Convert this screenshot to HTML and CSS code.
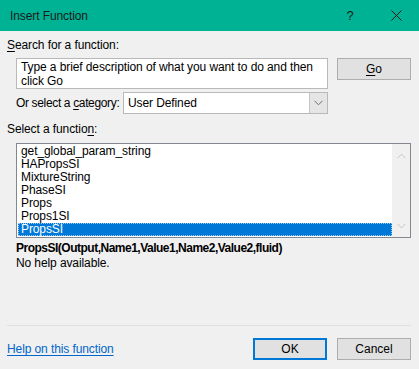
FILE: index.html
```html
<!DOCTYPE html>
<html lang="en">
<head>
    <meta charset="UTF-8">
    <title>Insert Function</title>
    <link rel="stylesheet" href="styles.css">
</head>
<body>
    <div class="dialog">
        <!-- Title bar -->
        <div class="titlebar">
            <span class="title">Insert Function</span>
            <span class="title-help">?</span>
            <span class="title-close">
                <svg width="11" height="11" viewBox="0 0 11 11"><path d="M0.5 0.5 L10.5 10.5 M10.5 0.5 L0.5 10.5" stroke="#1a1a1a" stroke-width="1"/></svg>
            </span>
        </div>

        <div class="content">
            <div class="label"><u>S</u>earch for a function:</div>

            <div class="search-row">
                <div class="search-box">Type a brief description of what you want to do and then click Go</div>
                <button class="btn"><u>G</u>o</button>
            </div>

            <div class="category-row">
                <span class="category-label">Or select a <u>c</u>ategory:</span>
                <div class="select">
                    <span class="select-value">User Defined</span>
                    <span class="select-arrow">
                        <svg width="9" height="6" viewBox="0 0 9 6"><path d="M0.5 0.8 L4.5 4.8 L8.5 0.8" fill="none" stroke="#6e6e6e" stroke-width="1"/></svg>
                    </span>
                </div>
            </div>

            <div class="label list-label">Select a functio<u>n</u>:</div>

            <div class="listbox">
                <div class="list-items">
                    <div class="list-item">get_global_param_string</div>
                    <div class="list-item">HAPropsSI</div>
                    <div class="list-item">MixtureString</div>
                    <div class="list-item">PhaseSI</div>
                    <div class="list-item">Props</div>
                    <div class="list-item">Props1SI</div>
                    <div class="list-item selected">PropsSI</div>
                </div>
                <div class="scrollbar">
                    <svg width="9" height="6" viewBox="0 0 9 6"><path d="M0.5 5.2 L4.5 1.2 L8.5 5.2" fill="none" stroke="#c2c2c2" stroke-width="1"/></svg>
                    <svg width="9" height="6" viewBox="0 0 9 6"><path d="M0.5 0.8 L4.5 4.8 L8.5 0.8" fill="none" stroke="#c2c2c2" stroke-width="1"/></svg>
                </div>
            </div>

            <div class="signature">PropsSI(Output,Name1,Value1,Name2,Value2,fluid)</div>
            <div class="help-text">No help available.</div>

            <div class="separator"></div>

            <div class="footer">
                <a class="help-link" href="#">Help on this function</a>
                <div class="footer-btns">
                    <button class="btn btn-default">OK</button>
                    <button class="btn">Cancel</button>
                </div>
            </div>
        </div>
    </div>
</body>
</html>
```

FILE: styles.css
```css
/* Insert Function dialog */
body { margin: 0; padding: 0; background: #f0f0f0; font-family: "Liberation Sans", Arial, sans-serif; font-size: 12px; letter-spacing: -0.1px; color: #000; }
u { text-decoration-thickness: 1px; text-underline-offset: 2px; }

.dialog { width: 419px; height: 369px; background: #f0f0f0; overflow: hidden; }

.titlebar { height: 31px; background: #00b294; display: flex; align-items: center; padding-left: 10px; color: #1a1a1a; }
.title { flex: 1; font-size: 12px; }
.title-help { width: 46px; text-align: center; font-size: 13px; }
.title-close { width: 46px; display: flex; justify-content: center; }

.content { padding: 0 8px 0 7px; }
.label { line-height: 15px; margin-top: 7px; }

.search-row { display: flex; justify-content: space-between; align-items: flex-start; margin-top: 5px; padding-left: 9px; }
.search-box { width: 306px; height: 28px; background: #fff; border: 1px solid #b9b9b9; padding: 1px 0 0 4px; line-height: 14px; }

.btn { width: 74px; height: 22px; background: #e1e1e1; border: 1px solid #adadad; font-family: inherit; font-size: 12px; color: #000; padding: 0; }
.btn-default { border: 2px solid #0078d7; }

.category-row { display: flex; align-items: center; margin-top: 3px; padding-left: 9px; height: 22px; }
.category-label { width: 107px; white-space: nowrap; letter-spacing: -0.35px; }
.select { width: 203px; height: 20px; background: #fff; border: 1px solid #b9b9b9; display: flex; align-items: center; }
.select-value { flex: 1; padding-left: 4px; }
.select-arrow { width: 17px; height: 20px; background: #e5e5e5; border-left: 1px solid #c4c4c4; display: flex; align-items: center; justify-content: center; }

.list-label { margin-top: 8px; }

.listbox { margin: 6px 0 0 9px; height: 93px; background: #fff; border: 1px solid #828790; display: flex; }
.list-items { flex: 1; padding: 1px 0 0 1px; }
.list-item { height: 13px; line-height: 13px; padding-left: 3px; white-space: nowrap; }
.list-item.selected { background: #0078d7; color: #fff; outline: 1px dotted #9fcaf0; outline-offset: -1px; }
.scrollbar { width: 18px; background: #f0f0f0; display: flex; flex-direction: column; justify-content: space-between; align-items: center; padding: 9px 0 8px; box-sizing: border-box; }

.signature { font-weight: bold; letter-spacing: -0.5px; line-height: 15px; margin: 3px 0 0 9px; }
.help-text { line-height: 15px; margin-left: 9px; }

.separator { height: 1px; background: #dfdfdf; margin-top: 54px; }

.footer { display: flex; justify-content: space-between; align-items: center; margin-top: 12px; }
.help-link { color: #0066cc; text-decoration: underline; text-underline-offset: 2px; }
.footer-btns { display: flex; gap: 10px; }
```
